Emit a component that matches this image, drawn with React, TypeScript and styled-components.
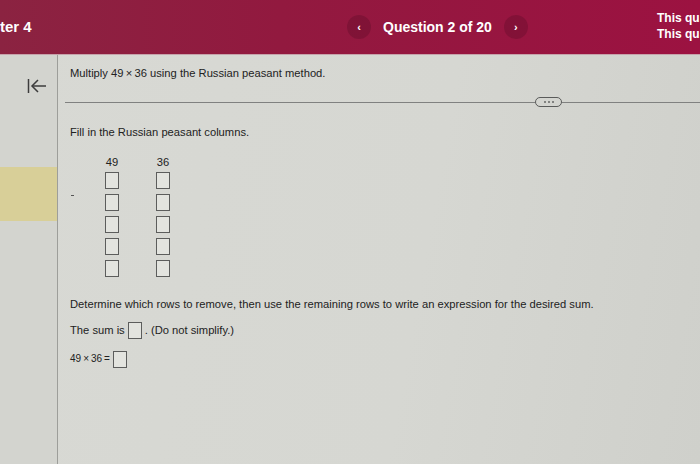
import styled, { createGlobalStyle } from "styled-components";

const Global = createGlobalStyle`
  html, body {
    margin: 0;
    padding: 0;
    width: 700px;
    height: 464px;
    overflow: hidden;
    font-family: "Liberation Sans", Arial, sans-serif;
    color: #222;
  }
`

const Page = styled.div`
  width: 700px;
  height: 464px;
  display: flex;
  flex-direction: column;
  background: linear-gradient(100deg, #d8d9d4 0%, #d6d7d2 60%, #cfd0cb 100%);
`

const Header = styled.header`
  height: 54px;
  flex: 0 0 54px;
  display: flex;
  align-items: center;
  color: #fff;
  background: linear-gradient(90deg, #8b2341 0%, #92193f 40%, #9c1241 100%);
  border-bottom: 1px solid #c6a3ab;
  overflow: hidden;
  > .title{
    flex: 0 0 347px;
    font-size: 15px;
    font-weight: bold;
    padding-bottom: 2px;
  }
  > .info{
    margin-left: auto;
    width: 43px;
    white-space: nowrap;
    font-size: 12px;
    font-weight: bold;
    line-height: 16px;
    padding-bottom: 2px;
  }
`

const Nav = styled.nav`
  display: flex;
  align-items: center;
  > span{
    font-size: 14px;
    font-weight: bold;
    margin: 0 12px;
  }
`

const NavButton = styled.button`
  width: 24px;
  height: 24px;
  border-radius: 50%;
  border: none;
  padding: 0;
  background: rgba(40, 0, 15, 0.18);
  color: #fff;
  font-size: 11px;
  font-weight: bold;
  display: flex;
  align-items: center;
  justify-content: center;
`

const Body = styled.div`
  flex: 1;
  display: flex;
`

const Sidebar = styled.aside`
  width: 57px;
  flex: 0 0 57px;
  border-right: 1px solid #9d9e9a;
  background: #d3d4cf;
  display: flex;
  flex-direction: column;
  > .back{
    height: 112px;
    display: flex;
    justify-content: center;
    padding: 23px 0 0 16px;
    box-sizing: border-box;
  }
  > .current{
    height: 54px;
    background: #d8cf98;
  }
`

const Content = styled.main`
  flex: 1;
  padding: 12px 0 0 12px;
  font-size: 11.2px;
  > p{
    margin: 0;
    line-height: 13px;
  }
`

const Divider = styled.div`
  margin: 17px 0 0 -5px;
  height: 10px;
  display: flex;
  align-items: center;
  &::before, &::after{
    content: "";
    height: 1px;
    background: #808180;
  }
  &::before{ flex: 0 0 470px; }
  &::after{ flex: 1; }
`

const Pill = styled.div`
  width: 25px;
  height: 8px;
  border: 1px solid #5a5b5a;
  border-radius: 5px;
  display: flex;
  align-items: center;
  justify-content: center;
  gap: 2px;
  > i{
    width: 2px;
    height: 2px;
    border-radius: 50%;
    background: #666;
  }
`

const Instruction = styled.p<{ $top: number }>`
  margin: ${p => p.$top}px 0 0 !important;
`

const PeasantGrid = styled.div`
  margin-top: 11px;
  display: grid;
  grid-template-columns: 5px 28px 28px;
  grid-auto-rows: 22px;
  column-gap: 23px;
  justify-items: center;
  align-items: start;
  > .head{
    line-height: 13px;
    margin-top: 6px;
  }
  > .dash{
    align-self: end;
    width: 3px;
    height: 1px;
    background: #555;
    margin-bottom: -2px;
  }
`

const AnswerBox = styled.span<{ $inline?: boolean }>`
  display: inline-block;
  box-sizing: border-box;
  width: 14px;
  height: 17px;
  border: 1.5px solid #5c5d5c;
  background: #e3e4df;
  vertical-align: middle;
  margin: ${p => (p.$inline ? "0 1px" : "0")};
`

const Line = styled.p<{ $top: number; $size?: number }>`
  margin: ${p => p.$top}px 0 0 !important;
  line-height: 18px !important;
  font-size: ${p => p.$size || 11.2}px;
  display: flex;
  align-items: center;
  gap: 2px;
`

function BackIcon() {
  return (
    <svg width="20" height="16" viewBox="0 0 20 16" fill="none" stroke="#3c3c3c" strokeWidth="1.5">
      <line x1="1.5" y1="1" x2="1.5" y2="15" />
      <line x1="19" y1="8" x2="5" y2="8" />
      <polyline points="11,2 5,8 11,14" />
    </svg>
  )
}

function App() {
  const rows = [0, 1, 2, 3, 4]
  return (
    <Page>
      <Global />
      <Header>
        <div className="title">ter 4</div>
        <Nav>
          <NavButton>‹</NavButton>
          <span>Question 2 of 20</span>
          <NavButton>›</NavButton>
        </Nav>
        <div className="info">
          <div>This qu</div>
          <div>This qu</div>
        </div>
      </Header>
      <Body>
        <Sidebar>
          <div className="back"><BackIcon /></div>
          <div className="current" />
        </Sidebar>
        <Content>
          <p>Multiply 49{"\u2009×\u2009"}36 using the Russian peasant method.</p>
          <Divider>
            <Pill><i /><i /><i /></Pill>
          </Divider>
          <Instruction $top={19}>Fill in the Russian peasant columns.</Instruction>
          <PeasantGrid>
            <span />
            <span className="head">49</span>
            <span className="head">36</span>
            {rows.map(r => (
              <>
                {r === 0 ? <span className="dash" /> : <span />}
                <AnswerBox />
                <AnswerBox />
              </>
            ))}
          </PeasantGrid>
          <Line $top={13}>Determine which rows to remove, then use the remaining rows to write an expression for the desired sum.</Line>
          <Line $top={8}>The sum is <AnswerBox $inline />. (Do not simplify.)</Line>
          <Line $top={11} $size={10}>49{"\u2009×\u2009"}36{"\u2009"}= <AnswerBox $inline /></Line>
        </Content>
      </Body>
    </Page>
  )
}
export default App;
